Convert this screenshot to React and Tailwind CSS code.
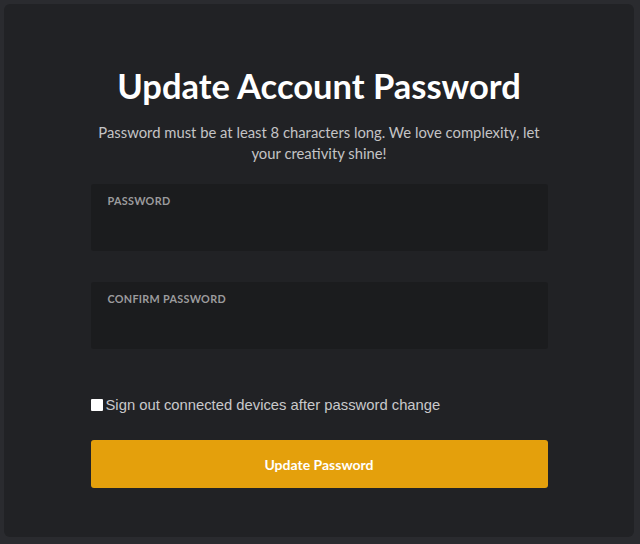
export default function App() {
  return (
    <div className="h-[544px] w-[640px] bg-[#2a2b2f] p-1">
      <div className="flex h-[533px] w-[630px] flex-col items-center rounded-md bg-[#212225] pt-[62px]">
        <h1 className="font-['Lato',sans-serif] text-[34.5px] font-bold leading-[40px] text-white">Update Account Password</h1>
        <p className="mt-[16px] w-[470px] text-center font-['Lato',sans-serif] text-[14.8px] leading-[21px] text-[#c4c4c6]">
          Password must be at least 8 characters long. We love complexity, let your creativity shine!
        </p>
        <form className="mt-[20px] flex w-[457px] flex-col" onSubmit={(e) => e.preventDefault()}>
          <Field label="Password" />
          <div className="h-[31px]" />
          <Field label="Confirm Password" />
          <label className="mt-[45px] flex items-center gap-[3px] font-['Liberation_Sans',sans-serif] text-[14.8px] text-[#c9c9cb]">
            <span className="h-[12px] w-[12px] rounded-[1px] bg-white" />
            Sign out connected devices after password change
          </label>
          <button
            type="button"
            className="mt-[24px] h-[48px] w-full rounded-[3px] bg-[#e4a00c] font-['Lato',sans-serif] text-[14px] font-bold text-white"
          >
            Update Password
          </button>
        </form>
      </div>
    </div>
  );
}

function Field({ label }) {
  return (
    <div className="h-[67px] rounded-[3px] bg-[#1b1c1e] px-[17px] pt-[9px]">
      <div className="font-['Lato',sans-serif] text-[10.8px] font-bold uppercase tracking-[0.3px] text-[#9b9b9d]">{label}</div>
    </div>
  );
}
